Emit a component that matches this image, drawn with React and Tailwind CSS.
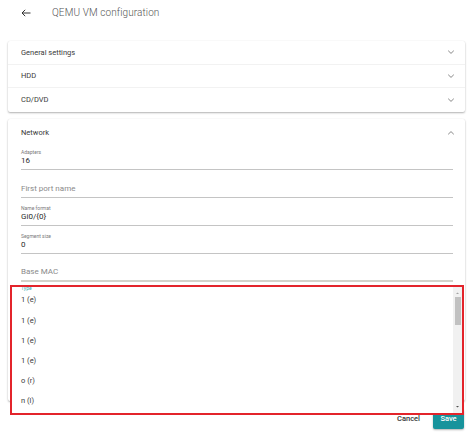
import React from "react";

const Chevron = ({ up }) => (
  <svg width="8" height="6" viewBox="0 0 8 6" className="shrink-0">
    <path
      d={up ? "M1.2 4.3 L4 1.6 L6.8 4.3" : "M1.2 1.7 L4 4.4 L6.8 1.7"}
      fill="none"
      stroke="#7a7a7a"
      strokeWidth="0.9"
    />
  </svg>
);

const Row = ({ label, last }) => (
  <div
    className={`h-[23.5px] flex items-center justify-between pl-[13px] pr-[10px] ${
      last ? "" : "border-b border-[#f2f2f2]"
    }`}
  >
    <span className="text-[7.5px] text-[#3a3a3a]">{label}</span>
    <Chevron />
  </div>
);

const Field = ({ label, value, placeholder, h = "h-[28px]", thick }) => (
  <div
    className={`${h} flex flex-col justify-end pb-[2px] ${
      thick ? "border-b-2 border-[#d2d2ca]" : "border-b border-[#c4c4c4]"
    }`}
  >
    {label && (
      <div className="text-[5px] leading-[6px] text-[#7a7a7a]">{label}</div>
    )}
    {value !== undefined ? (
      <div className="text-[8px] leading-[12px] text-[#2a2a2a]">{value}</div>
    ) : (
      <div className="text-[8px] leading-[12px] text-[#8a8a8a]">
        {placeholder}
      </div>
    )}
  </div>
);

export default function App() {
  const options = ["1 (e)", "1 (e)", "1 (e)", "1 (e)", "o (r)", "n (l)"];
  return (
    <div
      className="relative w-[474px] h-[435px] overflow-hidden bg-white"
      style={{ fontFamily: "Roboto, 'Noto Sans', sans-serif" }}
    >
      {/* header */}
      <div className="h-[25px] flex items-center pl-[21px]">
        <svg width="10" height="8" viewBox="0 0 10 8">
          <path
            d="M9.5 4 H1 M4.2 0.8 L1 4 L4.2 7.2"
            fill="none"
            stroke="#333"
            strokeWidth="1"
          />
        </svg>
        <span className="ml-[21px] text-[10px] text-[#555] font-light tracking-[0.1px]">
          QEMU VM configuration
        </span>
      </div>

      <div className="mx-[8px] w-[457px] mt-[16px]">
        {/* card 1 */}
        <div className="bg-white rounded-[2px] shadow-[0_1px_2px_rgba(0,0,0,0.3),0_0_1px_rgba(0,0,0,0.08)]">
          <Row label="General settings" />
          <Row label="HDD" />
          <Row label="CD/DVD" last />
        </div>

        {/* card 2 */}
        <div className="mt-[7px] h-[282px] bg-white rounded-[2px] shadow-[0_1px_2px_rgba(0,0,0,0.3),0_0_1px_rgba(0,0,0,0.08)]">
          <div className="h-[28px] flex items-center justify-between pl-[13px] pr-[10px]">
            <span className="text-[7.5px] text-[#3a3a3a]">Network</span>
            <Chevron up />
          </div>
          <div className="pl-[13px] pr-[12px]">
            <Field label="Adapters" value="16" h="h-[23px]" />
            <Field placeholder="First port name" />
            <Field label="Name format" value="Gi0/{0}" />
            <Field label="Segment size" value="0" />
            <Field placeholder="Base MAC" thick />
          </div>
        </div>
      </div>

      {/* footer */}
      <div className="mt-[8px] flex items-center justify-end pr-[10px] gap-[13px]">
        <span className="text-[7.5px] font-medium text-[#333]">Cancel</span>
        <div className="w-[31px] h-[20px] rounded-[2px] bg-[#17939c] flex items-center justify-center shadow-[0_1px_2px_rgba(0,0,0,0.3)]">
          <span className="text-[7.5px] font-medium text-white">Save</span>
        </div>
      </div>

      {/* dropdown overlay */}
      <div className="absolute left-[10px] top-[285px] w-[454px] h-[130px] border-2 border-[#e3242b] bg-white overflow-hidden">
        <div className="absolute left-[9px] top-[-2px] text-[5px] leading-[6px] text-[#3aa7ad]">
          Type
        </div>
        <div className="pt-[3px] pl-[9px]">
          {options.map((o, i) => (
            <div key={i} className="h-[20.2px] flex items-center text-[7.5px] text-[#3a3a3a]">
              {o}
            </div>
          ))}
        </div>
        {/* scrollbar */}
        <div className="absolute right-0 top-0 bottom-0 w-[9px] bg-[#f1f1f1] flex flex-col items-center">
          <svg width="5" height="8" viewBox="0 0 5 8" className="mt-[2px]">
            <path d="M1 5 L2.5 3.5 L4 5 Z" fill="#a3a3a3" />
          </svg>
          <div className="w-[6px] h-[28px] bg-[#c1c1c1]" />
          <div className="flex-1" />
          <svg width="5" height="8" viewBox="0 0 5 8" className="mb-[2px]">
            <path d="M1 3 L2.5 4.5 L4 3 Z" fill="#505050" />
          </svg>
        </div>
      </div>
    </div>
  );
}
